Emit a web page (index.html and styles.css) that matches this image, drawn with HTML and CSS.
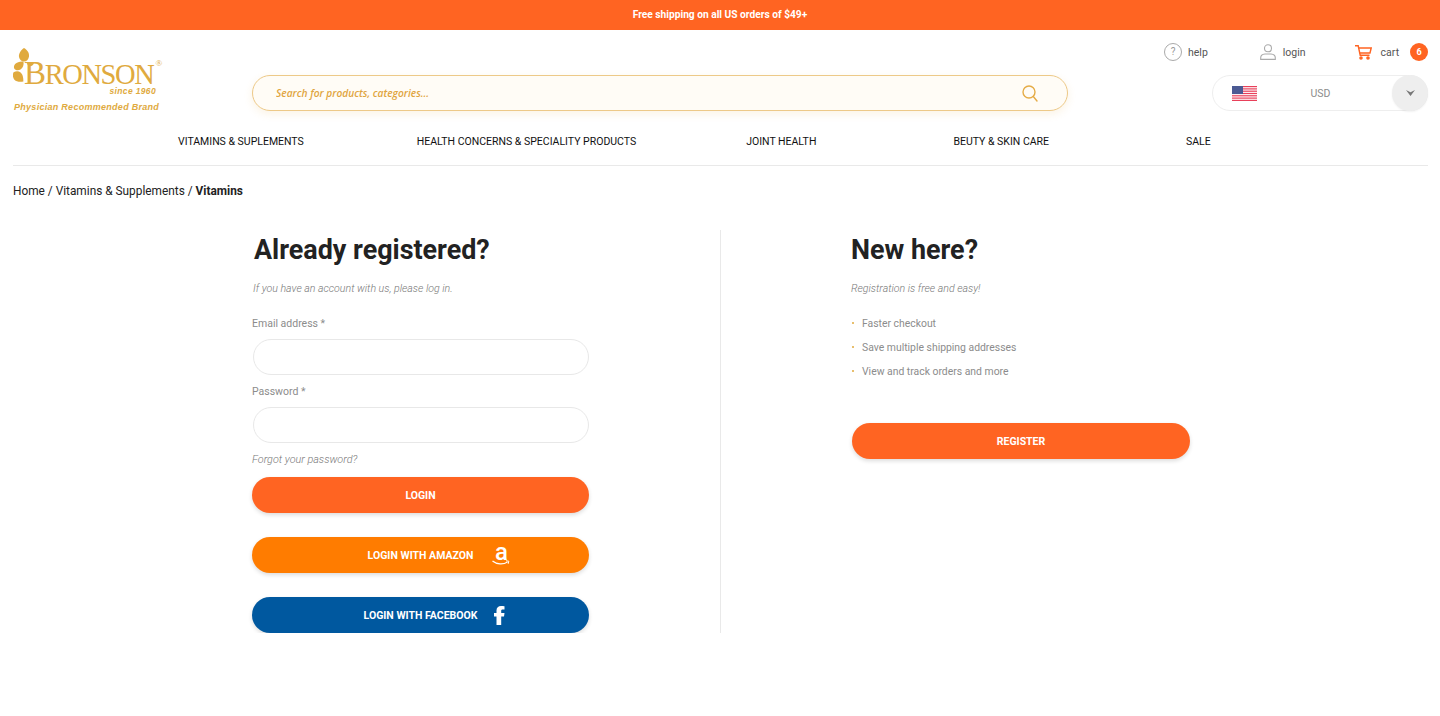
FILE: index.html
```html
<!DOCTYPE html>
<html lang="en">
<head>
  <meta charset="UTF-8" />
  <meta name="viewport" content="width=device-width, initial-scale=1" />
  <title>Bronson - Login</title>
  <link rel="stylesheet" href="styles.css">
</head>
<body>

  <div class="promo-bar">Free shipping on all US orders of $49+</div>

  <header class="site-header">
    <div class="header-main">
      <a href="#" class="logo">
        <span class="logo-mark">
          <svg class="logo-leaves" width="26" height="36" viewBox="0 0 26 36" aria-hidden="true">
            <path d="M11 0c3.500 2 5.500 5 5 8.500-.4 3-2.500 5-5 5s-4.500-2-5-4.500C5.500 5.500 8 2 11 0z" />
            <path d="M10.500 13.500c.5 3.500-.5 6.500-3 8-2 1.200-4.500 1-6-.5C.2 18.500 1.500 16 3.500 15c2.200-1.200 4.700-1.500 7-1.500z" />
            <path d="M.6 24.300c2.400-1.300 5-1.300 7 .2 2 1.700 2.700 4.300 2.800 9-3.500.8-7 .3-9-1.700C-.4 29.500-.5 26 .6 24.300z" />
            <path d="M14 15c3-1 5.500-.5 7 .5-1 2-3 3-5 2.500-1-.3-1.700-1.500-2-3z" />
          </svg>
          <span class="logo-name"><span class="logo-initial">B</span>RONSON</span>
          <span class="logo-reg">&reg;</span>
        </span>
        <span class="logo-since">since 1960</span>
        <span class="logo-tag">Physician Recommended Brand</span>
      </a>

      <div class="user-links">
        <a href="#" class="user-link help-link">
          <span class="help-icon">?</span>
          help
        </a>
        <a href="#" class="user-link login-link">
          <svg width="16" height="16" viewBox="0 0 16 16" fill="none" stroke="#aaa" stroke-width="1.100" aria-hidden="true">
            <circle cx="8" cy="4.300" r="3.500" />
            <path d="M.7 15.400v-1.600c0-2.400 2.200-3.600 4.300-3.800h6c2.100.2 4.300 1.400 4.300 3.800v1.600z" />
          </svg>
          login
        </a>
        <a href="#" class="user-link cart-link">
          <svg width="17" height="15" viewBox="0 0 17 15" fill="none" stroke="#ff6422" stroke-width="1.400" aria-hidden="true">
            <path d="M0 .8h3.200l2 9.400h9.300" />
            <path d="M3.700 3h12.500l-1.200 5H4.800" />
            <circle cx="6" cy="13" r="1.100" fill="#ff6422" />
            <circle cx="13" cy="13" r="1.100" fill="#ff6422" />
          </svg>
          <span class="cart-label">cart</span>
          <span class="cart-count">6</span>
        </a>
      </div>

      <form class="search-box">
        <input type="text" class="search-input" placeholder="Search for products, categories..." aria-label="Search" />
        <svg class="search-icon" width="16" height="17" viewBox="0 0 16 17" fill="none" stroke="#e5ac47" stroke-width="1.400" aria-hidden="true">
          <circle cx="7" cy="7" r="6" />
          <path d="M11.300 11.500l3.700 4.500" stroke-linecap="round" />
        </svg>
      </form>

      <div class="currency">
        <svg class="flag" width="25" height="15" viewBox="0 0 25 15" aria-hidden="true">
          <rect width="25" height="15" fill="#fff" />
          <g fill="#e8405a">
            <rect width="25" height="1.200" />
            <rect y="2.300" width="25" height="1.200" />
            <rect y="4.600" width="25" height="1.200" />
            <rect y="6.900" width="25" height="1.200" />
            <rect y="9.200" width="25" height="1.200" />
            <rect y="11.500" width="25" height="1.200" />
            <rect y="13.800" width="25" height="1.200" />
          </g>
          <rect width="11" height="8" fill="#4b5a93" />
        </svg>
        <span class="currency-code">USD</span>
        <span class="currency-toggle">
          <svg width="9" height="6" viewBox="0 0 9 6" aria-hidden="true"><path d="M0 0l4.500 2.200L9 0 4.500 6z" fill="#777" /></svg>
        </span>
      </div>
    </div>

    <nav class="main-nav">
      <a href="#" class="nav-first">VITAMINS &amp; SUPLEMENTS</a>
      <a href="#">HEALTH CONCERNS &amp; SPECIALITY PRODUCTS</a>
      <a href="#">JOINT HEALTH</a>
      <a href="#" class="nav-wide">BEUTY &amp; SKIN CARE</a>
      <a href="#" class="nav-wide">SALE</a>
    </nav>
  </header>

  <div class="breadcrumb">Home / Vitamins &amp; Supplements / <strong>Vitamins</strong></div>

  <main class="account">
    <section class="account-login">
      <h1>Already registered?</h1>
      <p class="intro">If you have an account with us, please log in.</p>
      <form>
        <label class="field-label" for="email">Email address *</label>
        <input id="email" type="email" class="field-input" />
        <label class="field-label" for="password">Password *</label>
        <input id="password" type="password" class="field-input" />
        <a href="#" class="forgot">Forgot your password?</a>
        <a href="#" class="btn btn-orange">LOGIN</a>
        <a href="#" class="btn btn-social btn-amazon">
          <span class="btn-label">LOGIN WITH AMAZON</span>
          <span class="amazon-icon">
            <span class="amazon-a">a</span>
            <svg width="18" height="6" viewBox="0 0 18 6" fill="none" stroke="#fff" stroke-width="1.300" aria-hidden="true">
              <path d="M.5 1c4.500 3.500 10.500 4 15 1" />
              <path d="M14 .8l2.800.4-.6 2.600" stroke-width="1" />
            </svg>
          </span>
        </a>
        <a href="#" class="btn btn-social btn-facebook">
          <span class="btn-label">LOGIN WITH FACEBOOK</span>
          <svg class="facebook-icon" width="11" height="19" viewBox="0 0 11 19" aria-hidden="true">
            <path d="M2.500 19V10.500H0V7h2.500V4.600C2.500 1.500 4.300 0 7 0c1.500 0 3 .1 3.500.2v3.300H8.700C7.500 3.500 7.200 4 7.200 5v2h3.300l-.5 3.500H7.200V19z" fill="#fff" />
          </svg>
        </a>
      </form>
    </section>

    <section class="account-register">
      <h1>New here?</h1>
      <p class="intro">Registration is free and easy!</p>
      <ul class="benefits">
        <li>Faster checkout</li>
        <li>Save multiple shipping addresses</li>
        <li>View and track orders and more</li>
      </ul>
      <a href="#" class="btn btn-orange btn-register">REGISTER</a>
    </section>
  </main>

</body>
</html>
```

FILE: styles.css
```css
:root {
  --orange: #ff6422;
  --amazon: #ff7c00;
  --facebook: #00589f;
  --gold: #e0aa3e;
  --text: #222;
  --muted: #8c8c8c;
  --line: #e9e9e9;
}
* {
  box-sizing: border-box;
}
body {
  margin: 0;
  font-family: 'Roboto', sans-serif;
  color: var(--text);
  background-color: #fff;
}
a {
  color: inherit;
  text-decoration: none;
}

/* Top bar */
.promo-bar {
  height: 30px;
  line-height: 30px;
  text-align: center;
  font-size: 10.200px;
  font-weight: 700;
  color: #fff;
  background-color: var(--orange);
}

/* Header */
.site-header {
  margin: 0 12px 0 13px;
  height: 136px;
  border-bottom: 1px solid var(--line);
}
.header-main {
  display: grid;
  grid-template-columns: 239px 816px 144px 216px;
  grid-template-rows: 20px 36px;
  row-gap: 13px;
  padding-top: 12px;
  grid-template-areas:
    "logo . . links"
    "logo search . currency";
}
.logo {
  grid-area: logo;
  display: flex;
  flex-direction: column;
  width: 152px;
  margin-top: 7px;
  color: var(--gold);
}
.logo-mark {
  display: flex;
  align-items: flex-end;
  height: 35px;
  font-family: 'Liberation Serif', serif;
}
.logo-leaves {
  flex: none;
  fill: var(--gold);
}
.logo-name {
  margin: 0 0 -2px -15px;
  font-size: 28.500px;
  line-height: 22px;
  letter-spacing: -1.400px;
  white-space: nowrap;
}
.logo-initial {
  font-size: 33px;
}
.logo-reg {
  align-self: flex-start;
  margin: 10px 0 0 2px;
  font-size: 9px;
  line-height: 8px;
}
.logo-since,
.logo-tag {
  font-family: 'Liberation Sans', sans-serif;
  font-style: italic;
  font-weight: 700;
}
.logo-since {
  margin: 2px 9px 0 0;
  text-align: right;
  font-size: 8.500px;
  line-height: 11px;
  letter-spacing: .35px;
}
.logo-tag {
  margin: 4px 0 0 1px;
  font-size: 9px;
  line-height: 13px;
  letter-spacing: .28px;
  white-space: nowrap;
}

.user-links {
  grid-area: links;
  display: flex;
  align-items: center;
  font-size: 10.500px;
  color: #555;
}
.user-link {
  display: flex;
  align-items: center;
}
.help-link {
  margin-left: -48px;
  gap: 6px;
}
.help-icon {
  width: 18px;
  height: 18px;
  line-height: 16px;
  text-align: center;
  font-size: 10px;
  color: #999;
  border: 1px solid #aaa;
  border-radius: 50%;
}
.login-link {
  margin-left: 52px;
  gap: 7px;
}
.cart-link {
  margin-left: 49px;
}
.cart-label {
  margin-left: 9px;
}
.cart-count {
  width: 18px;
  height: 18px;
  margin-left: 11px;
  line-height: 18px;
  text-align: center;
  font-size: 9px;
  font-weight: 700;
  color: #fff;
  background-color: var(--orange);
  border-radius: 50%;
}

.search-box {
  grid-area: search;
  display: flex;
  align-items: center;
  margin: 0;
  padding: 0 29px 0 23px;
  background-color: #fffcf6;
  border: 1px solid #edc988;
  border-radius: 18px;
  box-shadow: 0 3px 8px rgba(224, 170, 62, .14);
}
.search-input {
  flex: 1;
  border: 0;
  padding: 0 0 1px;
  outline: none;
  background: transparent;
  font-family: 'Open Sans', sans-serif;
  font-size: 10.200px;
  font-style: italic;
  font-weight: 600;
}
.search-input::placeholder {
  color: #dfa53f;
  opacity: 1;
}

.currency {
  grid-area: currency;
  display: flex;
  align-items: center;
  padding-left: 19px;
  border: 1px solid #eee;
  border-radius: 18px;
}
.flag {
  flex: none;
}
.currency-code {
  flex: 1;
  padding-right: 9px;
  text-align: center;
  font-size: 10.500px;
  color: #8c8c8c;
}
.currency-toggle {
  display: flex;
  align-items: center;
  justify-content: center;
  flex: none;
  width: 36px;
  height: 36px;
  margin: -1px;
  background-color: #eee;
  border-radius: 50%;
  box-shadow: 0 1px 2px rgba(0, 0, 0, .06);
}

.main-nav {
  display: flex;
  gap: 110px;
  padding: 24px 0 0 165px;
  font-size: 10.500px;
  line-height: 14px;
  color: #111;
}
.nav-first {
  margin-right: 3px;
}
.nav-wide {
  margin-left: 27px;
}

.breadcrumb {
  padding: 17px 0 0 13px;
  font-size: 11.850px;
  line-height: 17px;
}

/* Login and register columns */
.account {
  display: grid;
  grid-template-columns: 337px 340px;
  justify-content: start;
  column-gap: 261px;
  position: relative;
  margin: 30px 0 0 252px;
  height: 403px;
}
.account::before {
  content: "";
  position: absolute;
  top: 0;
  bottom: 0;
  left: 468px;
  width: 1px;
  background-color: var(--line);
}
.account h1 {
  margin: 1px 0 0 2px;
  font-size: 26.900px;
  line-height: 38px;
  font-weight: 700;
}
.account-register h1 {
  margin-left: 1px;
}
.intro {
  margin: 12px 0 0 1px;
  font-size: 10.600px;
  line-height: 16px;
  font-style: italic;
  font-weight: 300;
  color: #777;
}
.field-label {
  display: block;
  margin-top: 19px;
  font-size: 10.500px;
  line-height: 16px;
  color: var(--muted);
}
.field-label + .field-input {
  margin-top: 7px;
}
.field-input + .field-label {
  margin-top: 9px;
}
.field-input {
  display: block;
  width: 336px;
  height: 36px;
  margin-left: 1px;
  padding: 0 16px;
  border: 1px solid #e8e8e8;
  border-radius: 18px;
  outline: none;
}
.forgot {
  display: block;
  margin-top: 9px;
  font-size: 10.800px;
  line-height: 16px;
  font-style: italic;
  font-weight: 300;
  color: #777;
}
.btn {
  display: flex;
  align-items: center;
  justify-content: center;
  height: 36px;
  font-size: 10.500px;
  font-weight: 700;
  color: #fff;
  border-radius: 18px;
  box-shadow: 0 2px 4px rgba(0, 0, 0, .14);
}
.btn-orange {
  background-color: var(--orange);
}
.forgot + .btn {
  margin-top: 9px;
}
.btn-social {
  display: grid;
  grid-template-columns: 1fr auto 1fr;
  margin-top: 24px;
}
.btn-label {
  grid-column: 2;
}
.btn-amazon {
  background-color: var(--amazon);
}
.btn-facebook {
  background-color: var(--facebook);
}
.amazon-icon {
  display: flex;
  flex-direction: column;
  align-items: center;
  justify-self: start;
  height: 19px;
  margin: 0 0 4px 19px;
}
.amazon-a {
  flex: none;
  font-size: 24px;
  font-weight: 500;
  line-height: 17px;
}
.amazon-icon svg {
  flex: none;
  margin-top: -1px;
}
.facebook-icon {
  margin-left: 17px;
}

.benefits {
  margin: 14px 0 0;
  padding: 0;
  list-style: none;
  font-size: 10.400px;
  color: var(--muted);
}
.benefits li {
  display: flex;
  align-items: center;
  height: 24px;
  gap: 8px;
  padding-left: 2px;
}
.benefits li::before {
  content: "";
  width: 2px;
  height: 2px;
  background-color: var(--gold);
  border-radius: 50%;
}
.btn-register {
  width: 338px;
  margin: 40px 0 0 2px;
}
```
